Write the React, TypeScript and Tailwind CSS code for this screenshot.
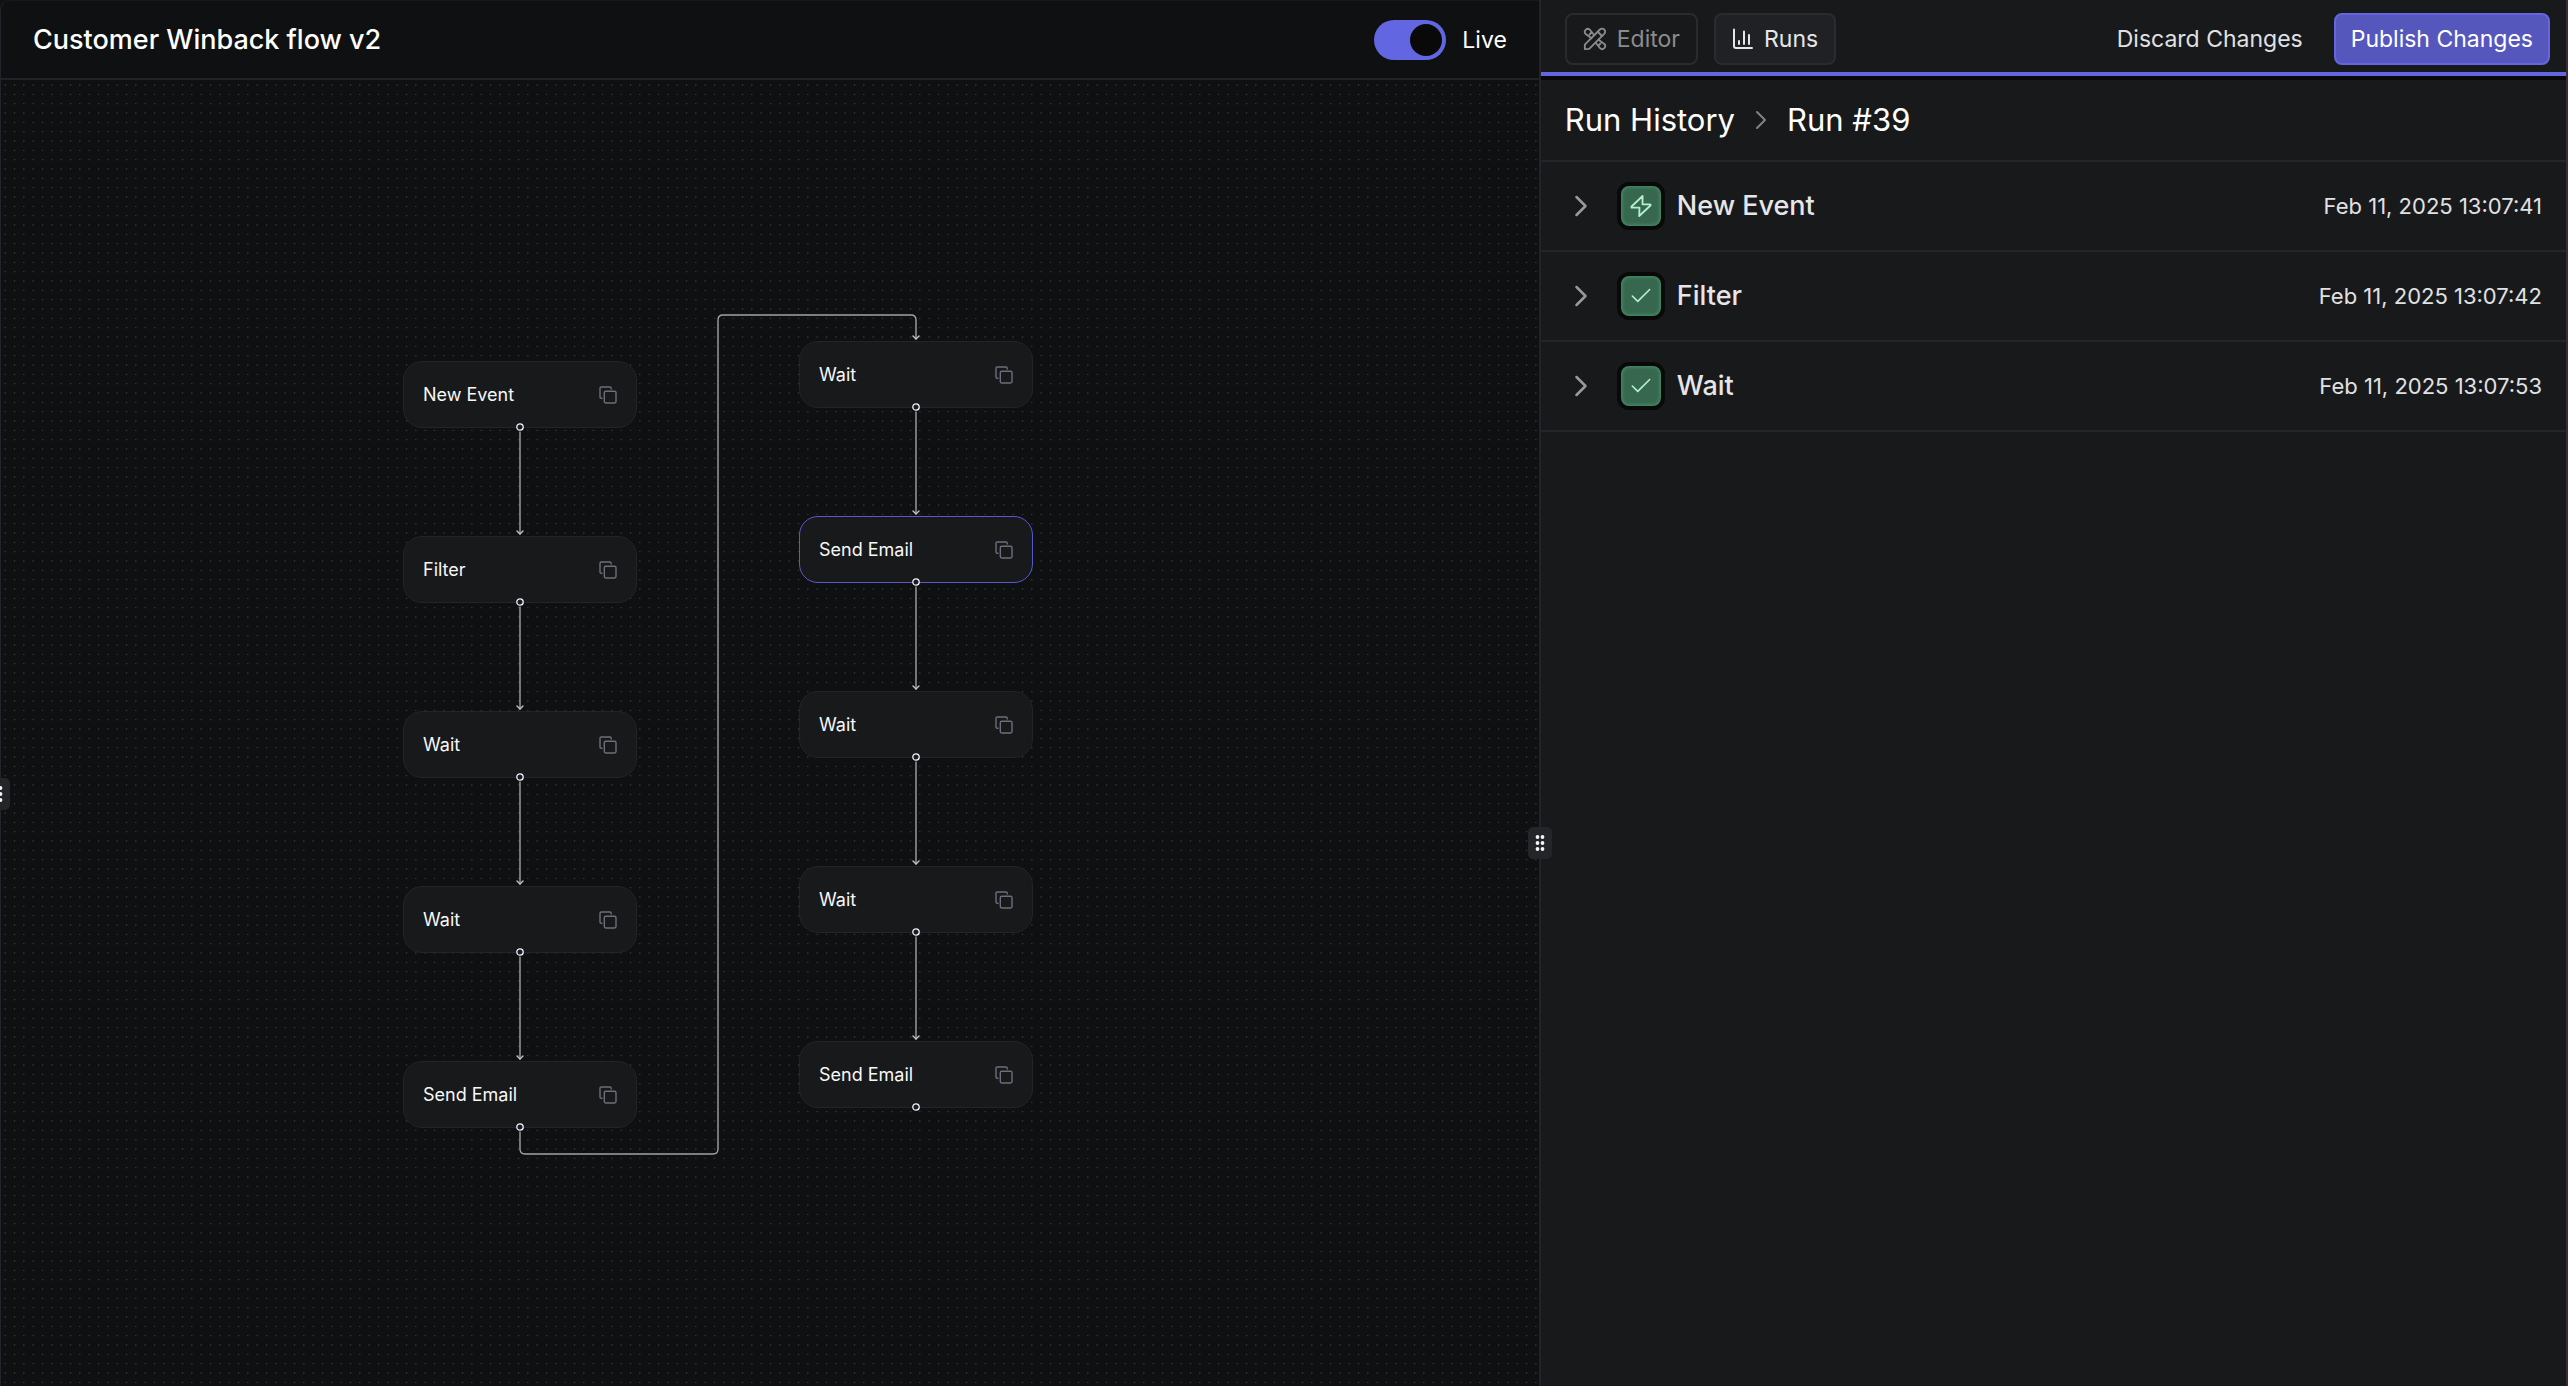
import React from "react";
import { Check, ChevronRight } from "lucide-react";

type FlowNode = { id: string; label: string; x: number; y: number; selected?: boolean };

const NODE_W = 234;
const NODE_H = 67;

const nodes: FlowNode[] = [
  { id: "l1", label: "New Event", x: 402, y: 281 },
  { id: "l2", label: "Filter", x: 402, y: 456 },
  { id: "l3", label: "Wait", x: 402, y: 631 },
  { id: "l4", label: "Wait", x: 402, y: 806 },
  { id: "l5", label: "Send Email", x: 402, y: 981 },
  { id: "r1", label: "Wait", x: 798, y: 261 },
  { id: "r2", label: "Send Email", x: 798, y: 436, selected: true },
  { id: "r3", label: "Wait", x: 798, y: 611 },
  { id: "r4", label: "Wait", x: 798, y: 786 },
  { id: "r5", label: "Send Email", x: 798, y: 961 },
];

const edges: [string, string][] = [
  ["l1", "l2"],
  ["l2", "l3"],
  ["l3", "l4"],
  ["l4", "l5"],
  ["r1", "r2"],
  ["r2", "r3"],
  ["r3", "r4"],
  ["r4", "r5"],
];

const runs = [
  { name: "New Event", time: "Feb 11, 2025 13:07:41", icon: "bolt" },
  { name: "Filter", time: "Feb 11, 2025 13:07:42", icon: "check" },
  { name: "Wait", time: "Feb 11, 2025 13:07:53", icon: "check" },
];

function find(id: string) {
  return nodes.find((n) => n.id === id)!;
}

function CopyIcon() {
  return (
    <svg width="18" height="18" viewBox="0 0 18 18" fill="none" stroke="#6c6e7b" strokeWidth="1.4" strokeLinecap="round" strokeLinejoin="round" aria-hidden="true">
      <rect x="5.3" y="5.3" width="11.7" height="11.7" rx="1.4" />
      <path d="M3 12.2H2.2A1.2 1.2 0 0 1 1 11V2.2A1.2 1.2 0 0 1 2.2 1H11a1.2 1.2 0 0 1 1.2 1.2V3" />
    </svg>
  );
}

function EditorIcon() {
  return (
    <svg width="24" height="24" viewBox="0 0 24 24" fill="none" stroke="currentColor" strokeWidth="1.8" strokeLinecap="round" strokeLinejoin="round" aria-hidden="true">
      <path d="M8.5 11.3 2.7 7a3 3 0 0 1 0-4.200 3 3 0 0 1 4.200 0L11.300 8.300" />
      <path d="m12.700 15.700 4.400 5.500a3 3 0 0 0 4.200 0 3 3 0 0 0 0-4.200L15.500 12.700" />
      <path d="m6.500 7.500 2-2M15.500 18.500l2-2" />
      <path d="M1.800 22.200V17.600L16.900 2.500a3 3 0 0 1 4.300 0 3 3 0 0 1 0 4.300L6.200 21.800z" />
      <path d="m15 5 4 4" />
    </svg>
  );
}

function RunsIcon() {
  return (
    <svg width="22" height="22" viewBox="0 0 22 22" fill="none" stroke="currentColor" strokeWidth="2" strokeLinecap="round" strokeLinejoin="round" aria-hidden="true">
      <path d="M2 1.500V18a2 2 0 0 0 2 2h16M7 13v3M12 3.500V16M17 7v9" />
    </svg>
  );
}

function BoltIcon() {
  return (
    <svg width="24" height="24" viewBox="0 0 24 24" fill="none" stroke="currentColor" strokeWidth="1.800" strokeLinejoin="round" strokeLinecap="round" className="shrink-0" aria-hidden="true">
      <path d="M13.600 2 2.600 12.500c-.5.500-.2 1.200.5 1.200h7.400L10.200 22 21.400 11.500c.5-.5.2-1.200-.5-1.200h-7.400z" />
    </svg>
  );
}

function Grip() {
  return (
    <svg width="10" height="16" viewBox="0 0 10 16" fill="#f4f4f5" aria-hidden="true">
      {[2, 8, 14].map((y) => (
        <g key={y}>
          <circle cx="2.500" cy={y} r="1.900" />
          <circle cx="7.500" cy={y} r="1.900" />
        </g>
      ))}
    </svg>
  );
}

function CanvasDrawing() {
  const a = find("l5");
  const b = find("r1");
  const ax = a.x + NODE_W / 2;
  const bx = b.x + NODE_W / 2;
  return (
    <svg className="absolute inset-0 h-full w-full" aria-hidden="true">
      <defs>
        <pattern id="dots" width="28" height="28" patternUnits="userSpaceOnUse">
          {[4.2, 13.53, 22.87].map((x) =>
            [5, 14.33, 23.67].map((y) => <circle key={x + "-" + y} cx={x} cy={y} r="0.700" fill="#404145" />),
          )}
        </pattern>
      </defs>
      <rect width="100%" height="100%" fill="url(#dots)" />
      <g fill="none" stroke="#a3a3a6" strokeWidth="1.400" strokeLinecap="round" strokeLinejoin="round">
        {edges.map(([from, to]) => {
          const s = find(from);
          const t = find(to);
          const x = s.x + NODE_W / 2;
          return (
            <g key={from}>
              <path d={`M${x} ${s.y + NODE_H + 4}V${t.y - 2}`} />
              <path d={`M${x - 3} ${t.y - 5}l3 3l3-3`} stroke="#c4c4c6" />
            </g>
          );
        })}
        <path
          d={`M${ax} ${a.y + NODE_H + 4}V${a.y + 88}q0 5 5 5H712q5 0 5-5V${b.y - 21}q0-5 5-5H${bx - 5}q5 0 5 5V${b.y - 2}`}
        />
        <path d={`M${bx - 3} ${b.y - 5}l3 3l3-3`} stroke="#c4c4c6" />
      </g>
    </svg>
  );
}

function NodeCard({ node }: { node: FlowNode }) {
  return (
    <div
      style={{ left: node.x, top: node.y, width: NODE_W, height: NODE_H }}
      className={
        "absolute flex items-center justify-between rounded-[19px] border bg-[#18191b] px-[19px] " +
        (node.selected ? "border-[#5a59cc]" : "border-[#232427]")
      }
    >
      <span className="text-[18px] leading-6 text-[#f7f7f8]">{node.label}</span>
      <button type="button" aria-label={"Duplicate " + node.label}>
        <CopyIcon />
      </button>
      <svg width="8" height="8" viewBox="0 0 8 8" className="absolute -bottom-1 left-1/2 -translate-x-1/2" aria-hidden="true">
        <circle cx="4" cy="4" r="3.200" fill="#1b1a2b" stroke="#f4f4f6" strokeWidth="1.300" />
      </svg>
    </div>
  );
}

export default function App() {
  const [live, setLive] = React.useState(true);
  return (
    <div className="flex h-screen w-full overflow-hidden border-r-2 border-[#3a2a38] bg-[#111214] font-['Inter',sans-serif] text-white">
      <main className="relative flex min-w-0 flex-[3] flex-col rounded-tl-[10px] border-l border-t border-l-[#232429] border-t-[#17181b] bg-[#0f1012]">
        <header className="flex h-[79px] shrink-0 items-center justify-between border-b-2 border-[#212227] px-8">
          <h1 className="text-[27px] font-medium leading-8">Customer Winback flow v2</h1>
          <label className="flex items-center gap-4 text-[23px] leading-8">
            <input type="checkbox" role="switch" checked={live} onChange={() => setLive(!live)} className="peer sr-only" />
            <span className="flex h-10 w-[72px] items-center justify-end rounded-full bg-[#6366e1] p-1">
              <span className="size-8 rounded-full bg-[#09090a]" />
            </span>
            Live
          </label>
        </header>
        <section className="relative min-h-0 flex-1 overflow-hidden" aria-label="Flow canvas">
          <CanvasDrawing />
          {nodes.map((n) => (
            <NodeCard key={n.id} node={n} />
          ))}
        </section>
        <button type="button" aria-label="Resize left panel" className="absolute -left-[15px] top-[777px] flex h-8 w-6 items-center justify-center rounded-[5px] bg-[#242529]">
          <Grip />
        </button>
      </main>
      <aside className="relative flex min-w-0 flex-[2] flex-col border-l-2 border-[#232429] bg-[#18191b]">
        <div className="flex h-20 shrink-0 flex-col border-b-4 border-[#09090a]">
          <div className="flex flex-1 items-center justify-between border-b-4 border-[#6366e1] px-4 pt-1.5 text-[23px]">
            <div className="flex gap-4 pl-2">
              <button type="button" className="flex h-[52px] items-center gap-2.5 rounded-lg border-2 border-[#2a2b2e] px-4 text-[#8b8c8f]">
                <EditorIcon />
                Editor
              </button>
              <button type="button" className="flex h-[52px] items-center gap-2.5 rounded-lg border-2 border-[#2a2b2e] bg-[#202125] px-4 text-[#e6e6e8]">
                <RunsIcon />
                Runs
              </button>
            </div>
            <div className="flex gap-4">
              <button type="button" className="h-[52px] px-[15px] text-[#e0e1e3]">Discard Changes</button>
              <button type="button" className="h-[52px] rounded-lg border-2 border-[#6366e1] bg-[#5657bd] px-[15px]">Publish Changes</button>
            </div>
          </div>
        </div>
        <nav aria-label="Breadcrumb" className="flex h-[82px] items-center gap-2.5 border-b-2 border-[#24252b] px-6 text-[31px] leading-10">
          <a href="#history">Run History</a>
          <ChevronRight size={32} strokeWidth={1.5} color="#858085" />
          <span>Run #39</span>
        </nav>
        <ul>
          {runs.map((r) => (
            <li key={r.name} className="flex h-[90px] items-center border-b-2 border-[#24252b] pl-[22px] pr-6">
              <button type="button" aria-label={"Expand " + r.name} className="text-[#9a989b]">
                <ChevronRight size={36} strokeWidth={1.7} />
              </button>
              <span className="ml-[18px] flex size-12 items-center justify-center rounded-[12px] border-4 border-[#09090a] bg-[#37684f] text-[#b2f0cf] shadow-[inset_0_0_4px_#4fa77a]">
                {r.icon === "bolt" ? <BoltIcon /> : <Check size={26} strokeWidth={1.5} />}
              </span>
              <span className="ml-3 text-[27px] font-medium leading-8 text-[#e6e6e8]">{r.name}</span>
              <time className="ml-auto text-[22px] text-[#e0e1e3]">{r.time}</time>
            </li>
          ))}
        </ul>
        <button type="button" aria-label="Resize right panel" className="absolute -left-[13px] top-[827px] flex h-8 w-6 items-center justify-center rounded-[5px] bg-[#242529]">
          <Grip />
        </button>
      </aside>
    </div>
  );
}
